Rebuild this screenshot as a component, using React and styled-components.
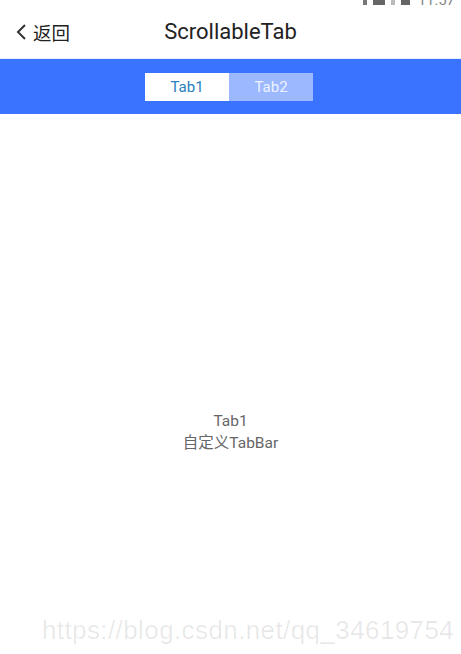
import React, { useState } from "react";
import styled, { createGlobalStyle } from "styled-components";

const GlobalStyle = createGlobalStyle`
  html, body {
    margin: 0;
    padding: 0;
    background: #ffffff;
  }
  body {
    font-family: Roboto, "Noto Sans CJK SC", sans-serif;
  }
`;

const Page = styled.div`
  width: 461px;
  height: 654px;
  display: flex;
  flex-direction: column;
  background: #fff;
  overflow: hidden;
  position: relative;
`;

// only the bottom edge of the status bar is visible in the shot
const StatusBar = styled.div`
  height: 5px;
  overflow: hidden;
  display: flex;
  justify-content: flex-end;
  align-items: flex-end;
  gap: 6px;
  padding-right: 6px;
`;

const StatusIcon = styled.div`
  width: ${(p) => p.w}px;
  height: 12px;
  background: ${(p) => p.color};
`;

const StatusTime = styled.div`
  font-size: 15px;
  line-height: 15px;
  color: #888;
  margin-left: 2px;
  margin-bottom: -3px;
`;

const Header = styled.div`
  height: 53px;
  display: grid;
  grid-template-columns: 100px 1fr 100px;
  align-items: center;
  border-bottom: 1px solid #e6ecf8;
`;

const BackButton = styled.div`
  display: flex;
  align-items: center;
  gap: 4px;
  padding-left: 15px;
  font-size: 18.5px;
  color: #222;
`;

const Title = styled.div`
  text-align: center;
  font-size: 22px;
  color: #222;
`;

const TabStrip = styled.div`
  height: 55px;
  background: #3a73ff;
  display: flex;
  justify-content: center;
  align-items: center;
`;

const TabGroup = styled.div`
  display: flex;
  margin-left: -3px;
`;

const TabButton = styled.div`
  width: 84px;
  height: 28px;
  display: flex;
  align-items: center;
  justify-content: center;
  font-size: 15px;
  cursor: pointer;
  background: ${(p) => (p.active ? "#ffffff" : "#9cb8ff")};
  color: ${(p) => (p.active ? "#2a80c0" : "#eef3ff")};
`;

const Content = styled.div`
  flex: 1;
  display: flex;
  flex-direction: column;
  align-items: center;
  justify-content: center;
  color: #666;
  font-size: 15.5px;
  line-height: 22px;
  padding-top: 96px;
`;

const Watermark = styled.div`
  position: absolute;
  left: 42px;
  bottom: 8px;
  font-family: "Liberation Sans", Arial, sans-serif;
  font-size: 26px;
  color: rgba(0, 0, 0, 0.09);
  letter-spacing: 0.4px;
  pointer-events: none;
`;

const ChevronLeft = () => (
  <svg width="14" height="18" viewBox="0 0 14 18">
    <path d="M10 2 L3 9 L10 16" fill="none" stroke="#333" strokeWidth="2" />
  </svg>
);

export default function App() {
  const [tab, setTab] = useState(0);
  const tabs = ["Tab1", "Tab2"];

  return (
    <Page>
      <GlobalStyle />
      <StatusBar>
        <StatusIcon w={4} color="#777" />
        <StatusIcon w={12} color="#666" />
        <StatusIcon w={4} color="#bbb" />
        <StatusIcon w={9} color="#666" />
        <StatusTime>11:57</StatusTime>
      </StatusBar>
      <Header>
        <BackButton>
          <ChevronLeft />
          返回
        </BackButton>
        <Title>ScrollableTab</Title>
        <div />
      </Header>
      <TabStrip>
        <TabGroup>
          {tabs.map((t, i) => (
            <TabButton key={t} active={i === tab} onClick={() => setTab(i)}>
              {t}
            </TabButton>
          ))}
        </TabGroup>
      </TabStrip>
      <Content>
        <div>{tabs[tab]}</div>
        <div>自定义TabBar</div>
      </Content>
      <Watermark>https://blog.csdn.net/qq_34619754</Watermark>
    </Page>
  );
}
